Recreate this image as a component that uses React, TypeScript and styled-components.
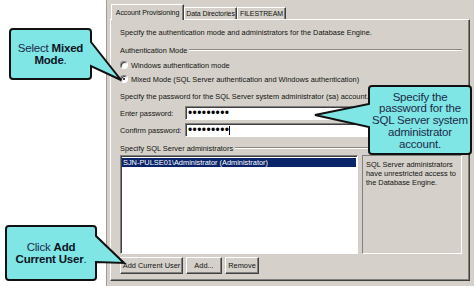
import styled, { createGlobalStyle, css } from 'styled-components';

const GlobalStyle = createGlobalStyle`
  html, body { margin: 0; padding: 0; background: #fff; }
  #root { width: 474px; height: 286px; overflow: hidden; }
`;

const Stage = styled.div`
  position: relative;
  display: flex;
  width: 474px;
  height: 286px;
  overflow: hidden;
  font-family: "Liberation Sans", Arial, sans-serif;
`;

const Gutter = styled.div`
  flex: none;
  width: 106px;
  background: #fff;
`;

const Dialog = styled.div`
  flex: 1;
  display: flex;
  flex-direction: column;
  padding: 4px 4px 5px 3px;
  background: #d5d1ca;
  border-left: 1px solid #a19d96;
  font-size: 7.4px;
  color: #111;
`;

const TabStrip = styled.div`
  position: relative;
  z-index: 1;
  display: flex;
  align-items: flex-end;
  height: 15px;
  padding-left: 1px;
`;

const Tab = styled.div<{ $active?: boolean; $w: number }>`
  display: flex;
  align-items: center;
  justify-content: center;
  box-sizing: border-box;
  width: ${p => p.$w}px;
  white-space: nowrap;
  font-size: 7px;
  letter-spacing: -0.1px;
  border-top: 1px solid #fff;
  border-left: 1px solid #fff;
  border-right: 1px solid #404040;
  box-shadow: inset -1px 0 #808080;
  background: #d5d1ca;
  ${p => p.$active
    ? css`height: 16px; margin-bottom: -1px;`
    : css`height: 12px;`}
`;

const Panel = styled.div`
  flex: 1;
  display: flex;
  flex-direction: column;
  box-sizing: border-box;
  padding: 8px 7px 0 9px;
  border-top: 1px solid #fff;
  border-left: 1px solid #fff;
  border-right: 1px solid #404040;
  border-bottom: 1px solid #404040;
  box-shadow: inset -1px -1px #808080;
`;

const Line = styled.div<{ $mt?: number }>`
  height: 10px;
  line-height: 10px;
  margin-top: ${p => p.$mt || 0}px;
  white-space: nowrap;
`;

const GroupHeader = styled.div<{ $mt: number }>`
  display: flex;
  align-items: center;
  gap: 2px;
  height: 10px;
  margin-top: ${p => p.$mt}px;
  white-space: nowrap;

  &::after {
    content: '';
    flex: 1;
    height: 0;
    border-top: 1px solid #8c8881;
    border-bottom: 1px solid #fff;
  }
`;

const RadioRow = styled.label<{ $mt: number }>`
  display: flex;
  align-items: center;
  gap: 3px;
  height: 10px;
  margin-top: ${p => p.$mt}px;
  white-space: nowrap;
`;

const Radio = styled.span<{ $checked?: boolean }>`
  position: relative;
  flex: none;
  width: 8px;
  height: 8px;
  box-sizing: border-box;
  border-radius: 50%;
  background: #fff;
  border: 1px solid;
  border-color: #808080 #fff #fff #808080;
  box-shadow: inset 1px 1px #404040;

  ${p => p.$checked && css`
    &::after {
      content: '';
      position: absolute;
      left: 2px;
      top: 2px;
      width: 2px;
      height: 2px;
      border-radius: 50%;
      background: #000;
    }
  `}
`;

const FieldRow = styled.div<{ $mt: number }>`
  display: flex;
  align-items: center;
  height: 14px;
  margin-top: ${p => p.$mt}px;
`;

const FieldLabel = styled.span`
  flex: none;
  width: 65px;
  white-space: nowrap;
`;

const PasswordBox = styled.div`
  flex: 1;
  display: flex;
  align-items: center;
  box-sizing: border-box;
  height: 14px;
  padding-left: 2px;
  background: #fff;
  border: 1px solid;
  border-color: #808080 #fff #fff #808080;
  box-shadow: inset 1px 1px #404040;
  font-size: 12px;
  letter-spacing: 0.4px;
  color: #000;
  overflow: hidden;
`;

const Caret = styled.span`
  width: 1px;
  height: 9px;
  background: #000;
`;

const AdminArea = styled.div`
  display: flex;
  gap: 4px;
  height: 99px;
  margin-top: 2px;
`;

const ListBox = styled.div`
  flex: none;
  width: 238px;
  box-sizing: border-box;
  padding: 2px 1px;
  background: #fff;
  border: 1px solid;
  border-color: #808080 #fff #fff #808080;
  box-shadow: inset 1px 1px #404040;
`;

const ListItem = styled.div<{ $selected?: boolean }>`
  height: 9px;
  line-height: 9px;
  padding-left: 1px;
  white-space: nowrap;
  ${p => p.$selected && css`
    background: #0a246a;
    color: #fff;
  `}
`;

const InfoBox = styled.div`
  flex: none;
  width: 100px;
  box-sizing: border-box;
  padding: 4px 3px;
  line-height: 9px;
  border: 1px solid;
  border-color: #808080 #fff #fff #808080;
`;

const ButtonRow = styled.div`
  display: flex;
  gap: 3px;
  margin-top: 3px;
`;

const Button = styled.button<{ $w: number }>`
  width: ${p => p.$w}px;
  height: 17px;
  padding: 0;
  box-sizing: border-box;
  font: inherit;
  color: #111;
  background: #d5d1ca;
  border: 1px solid;
  border-color: #fff #404040 #404040 #fff;
  box-shadow: inset -1px -1px #808080;
  white-space: nowrap;
`;

const Overlay = styled.svg`
  position: absolute;
  left: 0;
  top: 0;
  width: 474px;
  height: 286px;
  pointer-events: none;
`;

const CalloutText = styled.div<{ $x: number; $y: number; $w: number; $h: number }>`
  position: absolute;
  left: ${p => p.$x}px;
  top: ${p => p.$y}px;
  width: ${p => p.$w}px;
  height: ${p => p.$h}px;
  box-sizing: border-box;
  padding-top: 2px;
  display: flex;
  flex-direction: column;
  align-items: center;
  justify-content: center;
  text-align: center;
  font-size: 11.5px;
  line-height: 11.7px;
  letter-spacing: -0.2px;
  color: #1d2b48;

  b {
    color: #0c1424;
  }
`;

type Box = { x0: number; y0: number; x1: number; y1: number };

function calloutPath(b: Box, side: 'left' | 'right', a: number, tip: [number, number], c: number) {
  const r = 3;
  const { x0, y0, x1, y1 } = b;
  if (side === 'right') {
    return `M${x0 + r},${y0} H${x1 - r} Q${x1},${y0} ${x1},${y0 + r} V${a} L${tip[0]},${tip[1]} L${x1},${c} V${y1 - r} Q${x1},${y1} ${x1 - r},${y1} H${x0 + r} Q${x0},${y1} ${x0},${y1 - r} V${y0 + r} Q${x0},${y0} ${x0 + r},${y0} Z`;
  }
  return `M${x0 + r},${y0} H${x1 - r} Q${x1},${y0} ${x1},${y0 + r} V${y1 - r} Q${x1},${y1} ${x1 - r},${y1} H${x0 + r} Q${x0},${y1} ${x0},${y1 - r} V${c} L${tip[0]},${tip[1]} L${x0},${a} V${y0 + r} Q${x0},${y0} ${x0 + r},${y0} Z`;
}

const callouts = [
  { box: { x0: 10, y0: 29, x1: 91, y1: 79 }, side: 'right' as const, a: 42, tip: [121, 80] as [number, number], c: 66 },
  { box: { x0: 369, y0: 86, x1: 471, y1: 154 }, side: 'left' as const, a: 104, tip: [315, 115] as [number, number], c: 127 },
  { box: { x0: 6, y0: 226, x1: 96, y1: 280 }, side: 'right' as const, a: 236, tip: [124, 263] as [number, number], c: 262 },
];

const dots = '\u2022\u2022\u2022\u2022\u2022\u2022\u2022\u2022\u2022';

export default function App() {
  return (
    <Stage>
      <GlobalStyle />
      <Gutter />
      <Dialog>
        <TabStrip>
          <Tab $active $w={73}>Account Provisioning</Tab>
          <Tab $w={53}>Data Directories</Tab>
          <Tab $w={49}>FILESTREAM</Tab>
        </TabStrip>
        <Panel>
          <Line>Specify the authentication mode and administrators for the Database Engine.</Line>
          <GroupHeader $mt={7}>Authentication Mode</GroupHeader>
          <RadioRow $mt={5}>
            <Radio />
            Windows authentication mode
          </RadioRow>
          <RadioRow $mt={4}>
            <Radio $checked />
            Mixed Mode (SQL Server authentication and Windows authentication)
          </RadioRow>
          <GroupHeader $mt={7}>Specify the password for the SQL Server system administrator (sa) account.</GroupHeader>
          <FieldRow $mt={5}>
            <FieldLabel>Enter password:</FieldLabel>
            <PasswordBox>{dots}</PasswordBox>
          </FieldRow>
          <FieldRow $mt={3}>
            <FieldLabel>Confirm password:</FieldLabel>
            <PasswordBox>
              {dots}
              <Caret />
            </PasswordBox>
          </FieldRow>
          <GroupHeader $mt={6}>Specify SQL Server administrators</GroupHeader>
          <AdminArea>
            <ListBox>
              <ListItem $selected>SJN-PULSE01\Administrator (Administrator)</ListItem>
            </ListBox>
            <InfoBox>
              SQL Server administrators have unrestricted access to the Database Engine.
            </InfoBox>
          </AdminArea>
          <ButtonRow>
            <Button $w={63}>Add Current User</Button>
            <Button $w={36}>Add...</Button>
            <Button $w={34}>Remove</Button>
          </ButtonRow>
        </Panel>
      </Dialog>

      <Overlay viewBox="0 0 474 286">
        {callouts.map((c, i) => (
          <path
            key={i}
            d={calloutPath(c.box, c.side, c.a, c.tip, c.c)}
            fill="#7fe5e5"
            stroke="#111"
            strokeWidth={2}
            strokeLinejoin="miter"
          />
        ))}
      </Overlay>

      <CalloutText $x={10} $y={29} $w={81} $h={50}>
        <span>Select <b>Mixed</b></span>
        <span><b>Mode</b>.</span>
      </CalloutText>
      <CalloutText $x={369} $y={86} $w={102} $h={68}>
        <span>Specify the</span>
        <span>password for the</span>
        <span>SQL Server system</span>
        <span>administrator</span>
        <span>account.</span>
      </CalloutText>
      <CalloutText $x={6} $y={226} $w={90} $h={54}>
        <span>Click <b>Add</b></span>
        <span><b>Current User</b>.</span>
      </CalloutText>
    </Stage>
  );
}
